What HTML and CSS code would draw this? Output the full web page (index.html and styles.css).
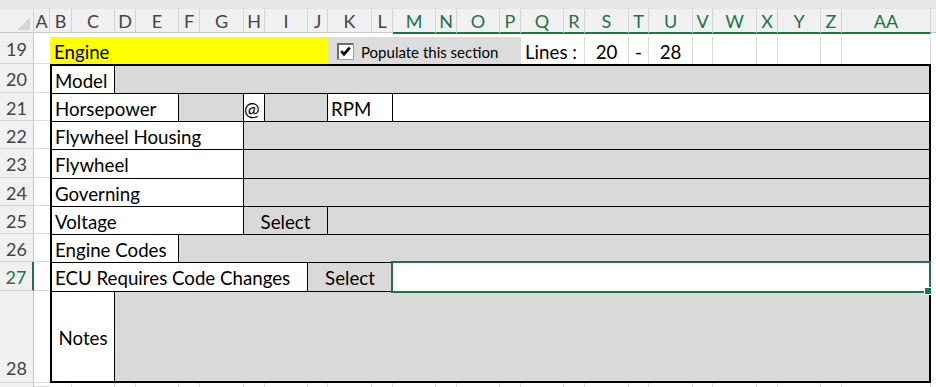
FILE: index.html
```html
<!DOCTYPE html>
<html lang="en">
<head>
    <meta charset="UTF-8">
    <meta name="viewport" content="width=device-width, initial-scale=1.0">
    <title>Engine - Order Sheet</title>

    <link rel="stylesheet" href="styles.css">
</head>
<body>
    <div class="top-strip"></div>

    <div class="col-heads">
        <div class="corner"></div>
        <span>A</span><span>B</span><span>C</span><span>D</span><span>E</span><span>F</span><span>G</span>
        <span>H</span><span>I</span><span>J</span><span>K</span><span>L</span>
        <span class="sel">M</span><span class="sel">N</span><span class="sel">O</span><span class="sel">P</span>
        <span class="sel">Q</span><span class="sel">R</span><span class="sel">S</span><span class="sel">T</span>
        <span class="sel">U</span><span class="sel">V</span><span class="sel">W</span><span class="sel">X</span>
        <span class="sel">Y</span><span class="sel">Z</span><span class="sel">AA</span>
        <div class="head-edge"></div>
    </div>

    <div class="sheet">
        <!-- row numbers -->
        <span class="rh">19</span>
        <span class="rh">20</span>
        <span class="rh">21</span>
        <span class="rh">22</span>
        <span class="rh">23</span>
        <span class="rh">24</span>
        <span class="rh">25</span>
        <span class="rh">26</span>
        <span class="rh sel">27</span>
        <span class="rh tall">28</span>
        <span class="rh blank"></span>

        <!-- column A -->
        <span class="col-a"></span><span class="col-a"></span><span class="col-a"></span><span class="col-a"></span>
        <span class="col-a"></span><span class="col-a"></span><span class="col-a"></span><span class="col-a"></span>
        <span class="col-a"></span><span class="col-a"></span><span class="col-a"></span>

        <div class="title-row">
            <div class="title span-9">Engine</div>
            <div class="populate span-6">
                <svg class="check" width="17" height="17" viewBox="0 0 17 17">
                    <rect x="0.5" y="0.5" width="16" height="16" fill="#fff" stroke="#a0a0a0"/>
                    <path d="M1 16V1h15" fill="none" stroke="#6d6d6d" stroke-width="2"/>
                    <path d="M4.2 8.2l2.8 3 5.8-6.6" fill="none" stroke="#000" stroke-width="2.6"/>
                </svg>
                <span>Populate this section</span>
            </div>
            <div class="grid-cell span-2 lines">Lines :</div>
            <div class="grid-cell num">20</div>
            <div class="grid-cell num">-</div>
            <div class="grid-cell num">28</div>
            <div class="grid-cell"></div>
            <div class="grid-cell"></div>
            <div class="grid-cell"></div>
            <div class="grid-cell"></div>
            <div class="grid-cell"></div>
            <div class="grid-cell"></div>
        </div>

        <div class="form">
            <div class="label span-2">Model</div>
            <div class="fill span-24"></div>

            <div class="label span-4">Horsepower</div>
            <div class="fill span-2"></div>
            <div class="label tight">@</div>
            <div class="fill span-2"></div>
            <div class="label span-2">RPM</div>
            <div class="label span-15"></div>

            <div class="label span-6">Flywheel Housing</div>
            <div class="fill span-20"></div>

            <div class="label span-6">Flywheel</div>
            <div class="fill span-20"></div>

            <div class="label span-6">Governing</div>
            <div class="fill span-20"></div>

            <div class="label span-6">Voltage</div>
            <div class="fill pick span-3">Select</div>
            <div class="fill span-17"></div>

            <div class="label span-4">Engine Codes</div>
            <div class="fill span-22"></div>

            <div class="label span-8">ECU Requires Code Changes</div>
            <div class="fill pick span-3">Select</div>
            <div class="label active span-15"></div>

            <div class="label notes span-2">Notes</div>
            <div class="fill span-24"></div>
        </div>

        <div class="tail-row">
            <span></span><span></span><span></span><span></span><span></span><span></span><span></span>
            <span></span><span></span><span></span><span></span><span></span><span></span><span></span>
            <span></span><span></span><span></span><span></span><span></span><span></span><span></span>
            <span></span><span></span><span></span><span></span><span></span>
        </div>

        <div class="sheet-edge"></div>
    </div>
</body>
</html>
```

FILE: styles.css
```css
* {
    padding: 0;
    margin: 0;
    box-sizing: border-box;
}

:root {
    --cols: 22px 43px 21px 43px 21px 44px 21px 43px 20px 44px 21px 43px 21px
            43px 21px 43px 21px 44px 20px 44px 20px 44px 21px 43px 21px 89px;
    --grid: #dadada;
    --green: #217346;
    --fill: #d9d9d9;
}

body {
    width: 936px;
    height: 387px;
    overflow: hidden;
    background-color: white;
    font-family: Lato, "Liberation Sans", sans-serif;
    color: black;
}

.top-strip {
    height: 9px;
    background-color: #e6e6e6;
}

/* column letters */
.col-heads {
    height: 24px;
    display: grid;
    grid-template-columns: 34px 16px var(--cols) 1fr;
    background-color: #f0f0f0;
    border-bottom: 1px solid #c8c8c8;
}

.col-heads span {
    display: flex;
    justify-content: center;
    align-items: center;
    border-right: 1px solid #d4d4d4;
    color: #444;
    font-size: 18px;
}

.col-heads span.sel {
    color: var(--green);
    border-bottom: 2px solid var(--green);
    margin-bottom: -1px;
    padding-top: 1px;
}

.corner {
    border-right: 1px solid #d4d4d4;
    background: linear-gradient(135deg, transparent 60%, #d6d6d6 60%) no-repeat right 3px bottom 3px / 16px 16px;
}

/* sheet body */
.sheet {
    height: 354px;
    display: grid;
    grid-auto-flow: column;
    grid-template-columns: 34px 16px 881px 1fr;
    grid-template-rows: 31px 29px 28px 28px 29px 28px 28px 28px 29px 92px 1fr;
}

.rh {
    display: flex;
    justify-content: center;
    align-items: center;
    padding-top: 2px;
    background-color: #f0f0f0;
    border-right: 1px solid #c8c8c8;
    border-bottom: 1px solid #d4d4d4;
    color: #444;
    font-size: 18px;
}

.rh.sel {
    color: var(--green);
    border-right: 2px solid var(--green);
}

.rh.tall {
    align-items: flex-end;
    padding-bottom: 3px;
}

.rh.blank {
    border-bottom: none;
}

.col-a {
    border-bottom: 1px solid var(--grid);
}

.sheet-edge {
    grid-row: span 11;
    background-color: white;
}

/* row 19 */
.title-row {
    display: grid;
    grid-template-columns: var(--cols);
    padding-top: 4px;
    font-size: 18.7px;
}

.title-row > div {
    display: flex;
    align-items: center;
    padding-top: 2px;
}

.title {
    background-color: yellow;
    padding-left: 4px;
}

.populate {
    background-color: #dcdcdc;
    padding-left: 9px;
    gap: 7px;
    font-size: 15px;
}

.check {
    flex-shrink: 0;
}

.grid-cell {
    border-right: 1px solid var(--grid);
}

.lines {
    padding-left: 4px;
}

.num {
    justify-content: center;
}

/* rows 20 - 28 */
.form {
    grid-row: span 9;
    display: grid;
    grid-template-columns: 19px 42px 20px 42px 20px 43px 20px 42px 19px 43px 20px 42px 20px
                           42px 20px 42px 20px 43px 19px 43px 19px 43px 20px 42px 20px 87px;
    grid-template-rows: 27px 27px 27px 28px 27px 27px 27px 28px 1fr;
    gap: 1px;
    background-color: black;
    border: 2px solid black;
    font-size: 18.7px;
}

.form > div {
    display: flex;
    align-items: center;
    padding-top: 2px;
    white-space: nowrap;
}

.label {
    background-color: white;
    padding-left: 3px;
}

.label.tight {
    padding-left: 0;
}

.fill {
    background-color: var(--fill);
}

.pick {
    justify-content: center;
}

.notes {
    justify-content: center;
    padding-left: 0;
}

.active {
    position: relative;
    outline: 2px solid var(--green);
}

.active::after {
    content: "";
    position: absolute;
    right: -3px;
    bottom: -4px;
    width: 6px;
    height: 6px;
    background-color: var(--green);
    border: 1px solid white;
}

.tail-row {
    display: grid;
    grid-template-columns: var(--cols);
}

.tail-row span {
    border-right: 1px solid var(--grid);
}

.span-2 { grid-column: span 2; }
.span-3 { grid-column: span 3; }
.span-4 { grid-column: span 4; }
.span-6 { grid-column: span 6; }
.span-8 { grid-column: span 8; }
.span-9 { grid-column: span 9; }
.span-15 { grid-column: span 15; }
.span-17 { grid-column: span 17; }
.span-20 { grid-column: span 20; }
.span-22 { grid-column: span 22; }
.span-24 { grid-column: span 24; }
```
